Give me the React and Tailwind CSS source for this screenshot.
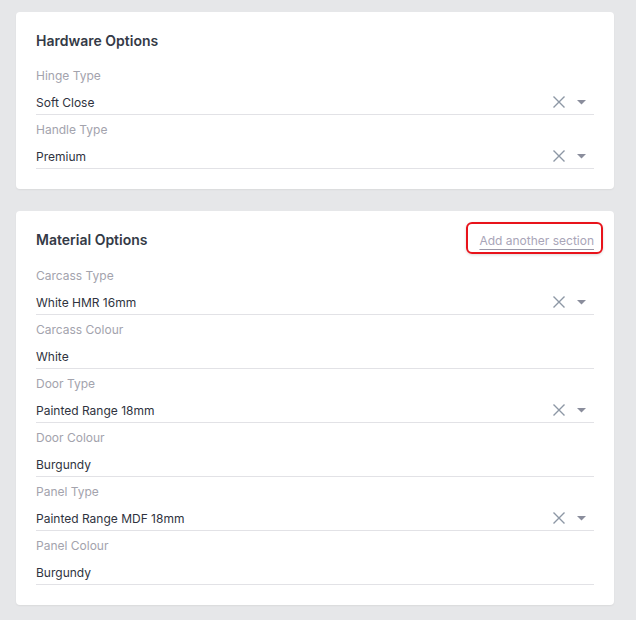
const hardware = [
  { label: 'Hinge Type', value: 'Soft Close', select: true },
  { label: 'Handle Type', value: 'Premium', select: true },
];

const material = [
  { label: 'Carcass Type', value: 'White HMR 16mm', select: true },
  { label: 'Carcass Colour', value: 'White' },
  { label: 'Door Type', value: 'Painted Range 18mm', select: true },
  { label: 'Door Colour', value: 'Burgundy' },
  { label: 'Panel Type', value: 'Painted Range MDF 18mm', select: true },
  { label: 'Panel Colour', value: 'Burgundy' },
];

const Field = ({ label, value, select }) => (
  <div className="mt-[5px] first:mt-0">
    <div className="h-[20px] text-[12px] leading-[20px] text-[#a3a3ad]">{label}</div>
    <div className="mt-[2px] h-[27px] flex items-center border-b border-[#e2e2e6] pt-[3px]">
      <span className="flex-1 text-[12px] text-[#2f3340]">{value}</span>
      {select && (
        <div className="flex items-center gap-[12px] pr-[8px] -mt-[1px]">
          <svg width="12" height="12" viewBox="0 0 12 12">
            <path d="M0.5 0.5 L11.5 11.5 M11.5 0.5 L0.5 11.5" stroke="#8d97a5" strokeWidth="1.4" />
          </svg>
          <svg width="9" height="5" viewBox="0 0 9 5">
            <path d="M0 0 L9 0 L4.5 4.5 Z" fill="#8a8d9c" />
          </svg>
        </div>
      )}
    </div>
  </div>
);

const Card = ({ title, fields, link }) => (
  <div className="bg-white rounded-[4px] shadow-[0_1px_2px_rgba(0,0,0,0.06)] px-[20px] pt-[18px] pb-[20px]">
    <div className="flex items-center justify-between h-[20px]">
      <h2 className="text-[14px] font-semibold text-[#343a46]">{title}</h2>
      {link && (
        <div className="border-2 border-[#e8131b] rounded-[6px] pl-[11px] pr-[7px] pt-[9px] pb-[3px] -mr-[9px] -mt-[2px] shadow-[0_1px_3px_rgba(0,0,0,0.15)]">
          <a className="block text-[12px] leading-[16px] text-[#a9a5b8] underline decoration-[#9a98a8] underline-offset-[4px] cursor-pointer">{link}</a>
        </div>
      )}
    </div>
    <div className={link ? 'mt-[17px]' : 'mt-[16px]'}>
      {fields.map((f) => (
        <Field key={f.label} {...f} />
      ))}
    </div>
  </div>
);

export default function App() {
  return (
    <div className="min-h-screen w-full bg-[#e6e7e9] pl-[16px] pr-[22px] pt-[12px] pb-[14px] font-['Inter',sans-serif]">
      <div className="flex flex-col gap-[22px]">
        <Card title="Hardware Options" fields={hardware} />
        <Card title="Material Options" fields={material} link="Add another section" />
      </div>
    </div>
  );
}
